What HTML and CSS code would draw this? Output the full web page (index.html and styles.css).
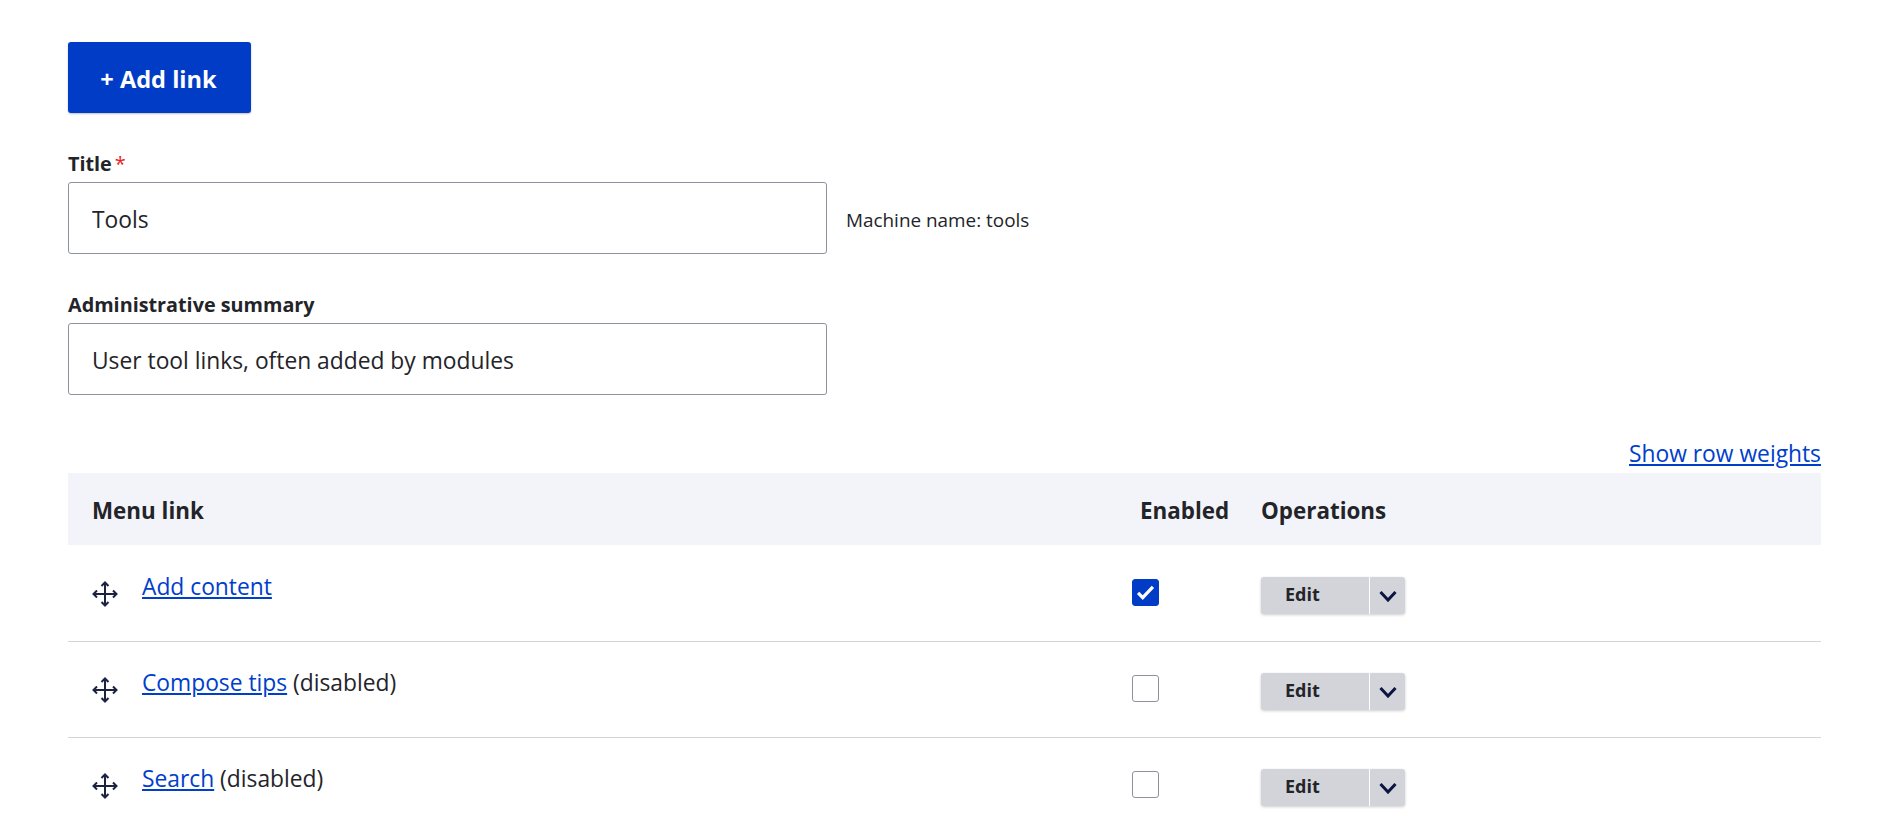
FILE: index.html
```html
<!DOCTYPE html>
<html lang="en">
<head>
  <meta charset="UTF-8" />
  <title>Edit menu: Tools</title>
  <link rel="stylesheet" href="styles.css">
</head>
<body>
  <div class="page">
    <a class="add-btn" href="#">+ Add link</a>

    <!-- TITLE -->
    <div class="field field-title">
      <label class="field-label" for="title">Title<span class="required">*</span></label>
      <div class="field-row">
        <input class="text-input" id="title" type="text" value="Tools">
        <span class="machine-name">Machine name: tools</span>
      </div>
    </div>

    <!-- SUMMARY -->
    <div class="field field-summary">
      <label class="field-label" for="summary">Administrative summary</label>
      <div class="field-row">
        <input class="text-input" id="summary" type="text" value="User tool links, often added by modules">
      </div>
    </div>

    <div class="weights"><a href="#">Show row weights</a></div>

    <!-- MENU LINKS -->
    <table class="links">
      <colgroup>
        <col class="col-link">
        <col class="col-enabled">
        <col class="col-ops">
      </colgroup>
      <thead>
        <tr>
          <th>Menu link</th>
          <th class="th-enabled">Enabled</th>
          <th class="th-ops">Operations</th>
        </tr>
      </thead>
      <tbody>
        <tr>
          <td>
            <div class="link-cell">
              <svg class="drag" viewBox="0 0 26 26"><path d="M13 1.5v23M1.5 13h23M9.5 5L13 1.5 16.500 5M9.500 21l3.500 3.500 3.500-3.500M5 9.500L1.500 13 5 16.500M21 9.500l3.500 3.500-3.500 3.500"/></svg>
              <span class="link-text"><a href="#">Add content</a></span>
            </div>
          </td>
          <td class="td-enabled"><span class="check checked"><svg viewBox="0 0 27 27"><path d="M5.500 14l5 5 11-11.500"/></svg></span></td>
          <td class="td-ops">
            <div class="dropbutton">
              <span class="drop-edit">Edit</span>
              <span class="drop-toggle"><svg viewBox="0 0 18 12"><path d="M1.500 2l7.500 8 7.500-8"/></svg></span>
            </div>
          </td>
        </tr>
        <tr>
          <td>
            <div class="link-cell">
              <svg class="drag" viewBox="0 0 26 26"><path d="M13 1.5v23M1.5 13h23M9.5 5L13 1.5 16.500 5M9.500 21l3.500 3.500 3.500-3.500M5 9.500L1.500 13 5 16.500M21 9.500l3.500 3.500-3.500 3.500"/></svg>
              <span class="link-text"><a href="#">Compose tips</a> (disabled)</span>
            </div>
          </td>
          <td class="td-enabled"><span class="check"></span></td>
          <td class="td-ops">
            <div class="dropbutton">
              <span class="drop-edit">Edit</span>
              <span class="drop-toggle"><svg viewBox="0 0 18 12"><path d="M1.500 2l7.500 8 7.500-8"/></svg></span>
            </div>
          </td>
        </tr>
        <tr>
          <td>
            <div class="link-cell">
              <svg class="drag" viewBox="0 0 26 26"><path d="M13 1.5v23M1.5 13h23M9.5 5L13 1.5 16.500 5M9.500 21l3.500 3.500 3.500-3.500M5 9.500L1.500 13 5 16.500M21 9.500l3.500 3.500-3.500 3.500"/></svg>
              <span class="link-text"><a href="#">Search</a> (disabled)</span>
            </div>
          </td>
          <td class="td-enabled"><span class="check"></span></td>
          <td class="td-ops">
            <div class="dropbutton">
              <span class="drop-edit">Edit</span>
              <span class="drop-toggle"><svg viewBox="0 0 18 12"><path d="M1.500 2l7.500 8 7.500-8"/></svg></span>
            </div>
          </td>
        </tr>
      </tbody>
    </table>
  </div>
</body>
</html>
```

FILE: styles.css
```css
/* Reset & Base */
* { box-sizing: border-box; margin: 0; padding: 0; }
html, body { height: 100%; }
body {
  font-family: "Open Sans", "Noto Sans", sans-serif;
  font-size: 22.800px;
  color: #232429;
  background: #fff;
}
a { color: #003ecc; }

.page {
  height: 822px;
  overflow: hidden;
  padding: 42px 58px 0 68px;
}

/* Add link button */
.add-btn {
  display: flex;
  align-items: center;
  justify-content: center;
  width: 183px;
  height: 71px;
  padding: 2px 2px 0 0;
  background: #003cc5;
  color: #fff;
  font-size: 23.600px;
  font-weight: 700;
  text-decoration: none;
  border-radius: 3px;
  box-shadow: 0 1px 2px rgba(0,0,0,0.25);
}

/* Form fields */
.field-title { margin-top: 36px; }
.field-summary { margin-top: 37px; }
.field-label {
  display: block;
  height: 33px;
  line-height: 30px;
  font-size: 19.800px;
  font-weight: 700;
}
.field-summary .field-label { height: 32px; line-height: 28px; }
.required {
  color: #e3242b;
  font-size: 20px;
  font-weight: 400;
  margin-left: 3px;
}
.field-row {
  display: flex;
  align-items: center;
}
.text-input {
  width: 759px;
  height: 72px;
  padding: 2px 23px 0;
  font: inherit;
  color: #232429;
  border: 1px solid #8e929c;
  border-radius: 3px;
  background: #fff;
}
.machine-name {
  margin-left: 19px;
  padding-top: 3px;
  font-size: 18.900px;
}

/* Show row weights */
.weights {
  margin-top: 43px;
  height: 35px;
  text-align: right;
  line-height: 32px;
}

/* Table */
.links {
  width: 1753px;
  border-collapse: separate;
  border-spacing: 0;
  table-layout: fixed;
}
.col-link { width: 1049px; }
.col-enabled { width: 124px; }
.links thead tr {
  height: 72px;
  background: #f3f4f9;
}
.links th {
  text-align: left;
  font-size: 22.400px;
  font-weight: 700;
  padding: 2px 0 0 24px;
}
.links th.th-enabled { padding-left: 23px; }
.links th.th-ops { padding-left: 20px; }
.links td {
  height: 96px;
  vertical-align: top;
  border-top: 1px solid #d3d4d9;
}
.links tbody tr:first-child td { border-top-color: transparent; }

.link-cell {
  display: flex;
  align-items: flex-start;
  padding: 35px 0 0 24px;
}
.drag {
  width: 26px;
  height: 26px;
  fill: none;
  stroke: #1b2340;
  stroke-width: 2;
}
.link-text {
  margin-left: 24px;
  margin-top: -10px;
}

.links .td-enabled { padding: 33px 0 0 15px; }
.check {
  display: block;
  width: 27px;
  height: 27px;
  border: 1px solid #8e929c;
  border-radius: 3px;
  background: #fff;
}
.check.checked {
  background: #003cc5;
  border-color: #003cc5;
}
.check svg {
  display: block;
  width: 25px;
  height: 25px;
  fill: none;
  stroke: #fff;
  stroke-width: 3.500;
}

/* Dropbutton */
.links .td-ops { padding: 31px 0 0 20px; }
.dropbutton {
  display: flex;
  width: 144px;
  height: 37px;
  background: #d3d4d9;
  border-radius: 3px;
  box-shadow: 0 1px 3px rgba(0,0,0,0.2);
}
.drop-edit {
  width: 109px;
  padding-left: 24px;
  font-size: 18px;
  font-weight: 700;
  line-height: 34px;
  border-right: 1px solid #fff;
}
.drop-toggle {
  flex: 1;
  display: flex;
  align-items: center;
  justify-content: center;
}
.drop-toggle svg {
  width: 18px;
  height: 12px;
  fill: none;
  stroke: #0b1540;
  stroke-width: 3;
}
```
